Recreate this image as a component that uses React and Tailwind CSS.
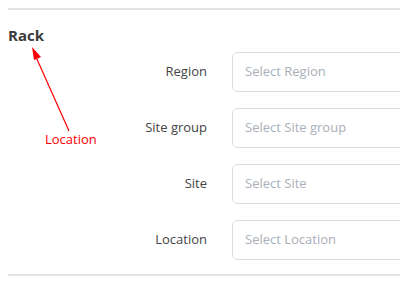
import React from "react";

const fields = [
  { label: "Region", placeholder: "Select Region" },
  { label: "Site group", placeholder: "Select Site group" },
  { label: "Site", placeholder: "Select Site" },
  { label: "Location", placeholder: "Select Location" },
];

const App = () => {
  return (
    <div
      className="relative w-[400px] h-[292px] overflow-hidden bg-white pt-[8px] pl-2"
      style={{ fontFamily: '"Open Sans", "Noto Sans", sans-serif' }}
    >
      {/* Top divider */}
      <div className="border-t-2 border-[#e4e4e4] w-[420px]" />

      <h3 className="mt-[15px] h-[20px] leading-[20px] text-[15px] font-bold text-[#3b3b3b]">
        Rack
      </h3>

      {/* Fields */}
      <div className="mt-[7px] flex flex-col gap-4">
        {fields.map((f) => (
          <div key={f.label} className="flex items-center h-10">
            <label className="w-[199px] shrink-0 text-right text-[13px] text-[#444]">
              {f.label}
            </label>
            <div className="ml-[25px] w-[220px] h-10 shrink-0 rounded-md border border-[#d9dce1] flex items-center px-3 text-[13px] text-[#a9afb8]">
              {f.placeholder}
            </div>
          </div>
        ))}
      </div>

      {/* Bottom divider */}
      <div className="mt-[14px] border-t-2 border-[#e4e4e4] w-[420px]" />

      {/* Annotation */}
      <svg className="absolute left-0 top-0" width="400" height="292">
        <line x1="69" y1="131" x2="36" y2="57" stroke="#ff0000" strokeWidth="1.2" />
        <polygon points="32,47 41,57 34,60" fill="#ff0000" />
      </svg>
      <span className="absolute left-[45px] top-[130px] text-[13px] leading-[18px] text-[#f00]">
        Location
      </span>
    </div>
  );
};

export default App;
